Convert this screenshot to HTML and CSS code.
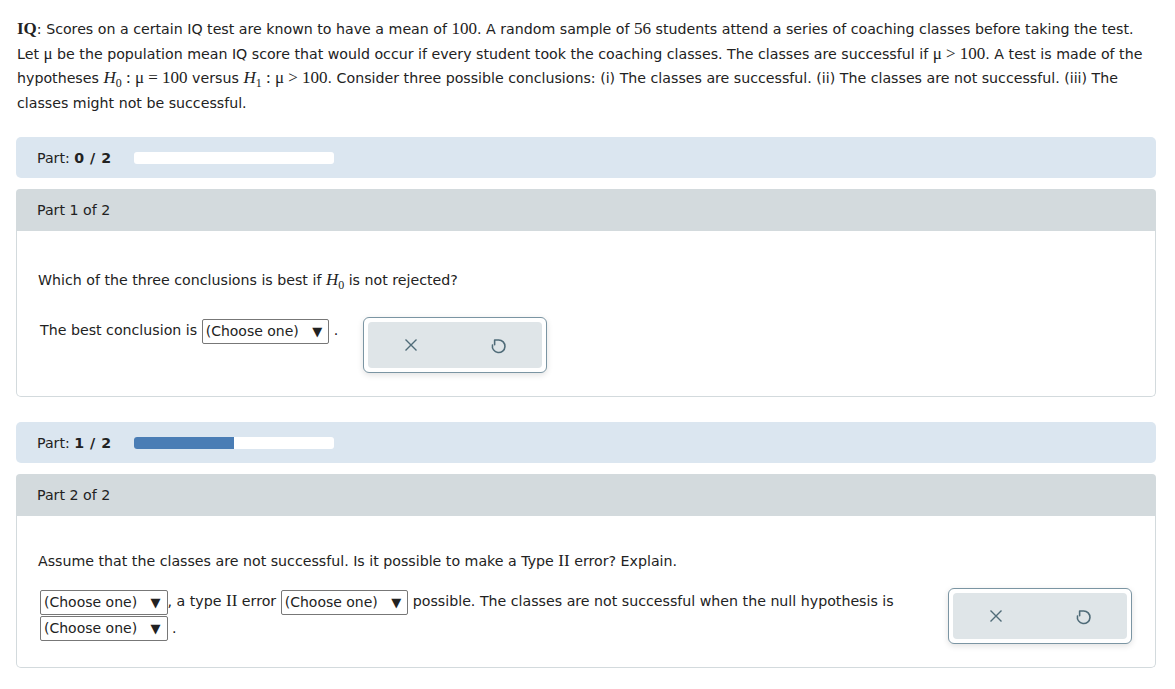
FILE: index.html
```html
<!DOCTYPE html>
<html lang="en">
<head>
    <meta charset="UTF-8">
    <title>IQ coaching classes</title>
    <link rel="stylesheet" href="styles.css">
</head>
<body>
    <div class="problem">
        <p class="intro">
            <b class="m">IQ</b>: Scores on a certain IQ test are known to have a mean of <span class="m">100</span>. A random sample of <span class="m">56</span> students attend a series of coaching classes before taking the test.
            Let <span class="m">μ</span> be the population mean IQ score that would occur if every student took the coaching classes. The classes are successful if <span class="m">μ &gt; 100</span>. A test is made of the
            hypotheses <span class="m"><i>H</i><sub>0</sub> : μ = 100</span> versus <span class="m"><i>H</i><sub>1</sub> : μ &gt; 100</span>. Consider three possible conclusions: (i) The classes are successful. (ii) The classes are not successful. (iii) The classes might not be successful.
        </p>

        <div class="progress">
            <span>Part: <b>0 / 2</b></span>
            <div class="bar"><div class="fill" style="width:0%"></div></div>
        </div>
        <div class="part">
            <div class="part-head">Part 1 of 2</div>
            <div class="part-body">
                <p class="question">Which of the three conclusions is best if <span class="m"><i>H</i><sub>0</sub></span> is not rejected?</p>
                <div class="answer-row">
                    <div class="answer">
                        The best conclusion is <span class="choose">(Choose one) <span class="arrow">▼</span></span> .
                    </div>
                    <div class="tools">
                        <div class="tools-inner">
                            <svg width="16" height="16" viewBox="0 0 16 16"><path d="M2.5 2.5 L13.5 13.5 M13.5 2.5 L2.5 13.5" stroke="#4f6b78" stroke-width="1.4" fill="none"/></svg>
                            <svg width="18" height="18" viewBox="0 0 16 16"><path d="M5 7.8 V3.5 H8.5 A5.6 5.6 0 1 1 3.1 8" stroke="#4f6b78" stroke-width="1.4" fill="none" stroke-linecap="round" stroke-linejoin="round"/></svg>
                        </div>
                    </div>
                </div>
            </div>
        </div>

        <div class="progress second">
            <span>Part: <b>1 / 2</b></span>
            <div class="bar"><div class="fill" style="width:50%"></div></div>
        </div>
        <div class="part">
            <div class="part-head">Part 2 of 2</div>
            <div class="part-body tight">
                <p class="question">Assume that the classes are not successful. Is it possible to make a Type <span class="m">II</span> error? Explain.</p>
                <div class="answer-row">
                    <div class="answer wide">
                        <span class="choose">(Choose one) <span class="arrow">▼</span></span>, a type <span class="m">II</span> error <span class="choose">(Choose one) <span class="arrow">▼</span></span> possible. The classes are not successful when the null hypothesis is
                        <span class="choose">(Choose one) <span class="arrow">▼</span></span> .
                    </div>
                    <div class="tools">
                        <div class="tools-inner">
                            <svg width="16" height="16" viewBox="0 0 16 16"><path d="M2.5 2.5 L13.5 13.5 M13.5 2.5 L2.5 13.5" stroke="#4f6b78" stroke-width="1.4" fill="none"/></svg>
                            <svg width="18" height="18" viewBox="0 0 16 16"><path d="M5 7.8 V3.5 H8.5 A5.6 5.6 0 1 1 3.1 8" stroke="#4f6b78" stroke-width="1.4" fill="none" stroke-linecap="round" stroke-linejoin="round"/></svg>
                        </div>
                    </div>
                </div>
            </div>
        </div>
    </div>
</body>
</html>
```

FILE: styles.css
```css
body {
    margin: 0;
    font-family: "DejaVu Sans", Verdana, sans-serif;
    font-size: 14.2px;
    color: #222;
    background: #fff;
}
.problem {
    padding: 17px 19px 0 16px;
}
.m {
    font-family: "Liberation Serif", "Times New Roman", serif;
    font-size: 17px;
    line-height: 1;
}
.m sub {
    font-size: 12px;
    vertical-align: -4px;
    line-height: 0;
}
.intro {
    margin: 0 0 22px 1px;
    line-height: 24.6px;
}
.progress {
    display: flex;
    align-items: center;
    height: 41px;
    padding: 0 21px;
    background: #dbe6f0;
    border-radius: 5px;
}
.progress b {
    letter-spacing: 0.5px;
}
.progress.second {
    margin-top: 25px;
}
.bar {
    width: 200px;
    height: 12px;
    margin-left: 22px;
    background: #fff;
    border-radius: 3px;
    overflow: hidden;
}
.fill {
    height: 100%;
    background: #4a7db5;
}
.part {
    margin-top: 11px;
}
.part-head {
    height: 42px;
    line-height: 42px;
    padding: 0 21px;
    background: #d3dadd;
    border-radius: 4px 4px 0 0;
}
.part-body {
    padding: 40px 20px 23px 20px;
    border: 1px solid #d3dadd;
    border-top: none;
    border-radius: 0 0 5px 5px;
}
.question {
    margin: 0 0 28px 1px;
    line-height: 18px;
}
.part-body.tight {
    padding-top: 36px;
}
.part-body.tight .question {
    margin-bottom: 18px;
}
.answer-row {
    display: flex;
    align-items: flex-start;
    padding-left: 3px;
}
.answer {
    line-height: 24px;
    padding-top: 1px;
}
.answer.wide {
    width: 886px;
    line-height: 26px;
    padding-top: 0;
}
.choose {
    display: inline-block;
    height: 23px;
    line-height: 23px;
    padding: 0 6px 0 3px;
    border: 1px solid #777;
    border-radius: 2px;
    vertical-align: middle;
    font-size: 14px;
}
.arrow {
    margin-left: 9px;
    font-size: 13px;
}
.tools {
    margin-left: 25px;
    width: 184px;
    padding: 4px;
    box-sizing: border-box;
    border: 1px solid #7b95a3;
    border-radius: 6px;
    background: #fff;
    box-shadow: 0 2px 6px rgba(0, 0, 0, 0.12);
}
.answer.wide + .tools {
    margin-left: 22px;
}
.tools-inner {
    display: flex;
    justify-content: space-around;
    align-items: center;
    height: 46px;
    background: #dfe5e8;
    border-radius: 4px;
}
```
